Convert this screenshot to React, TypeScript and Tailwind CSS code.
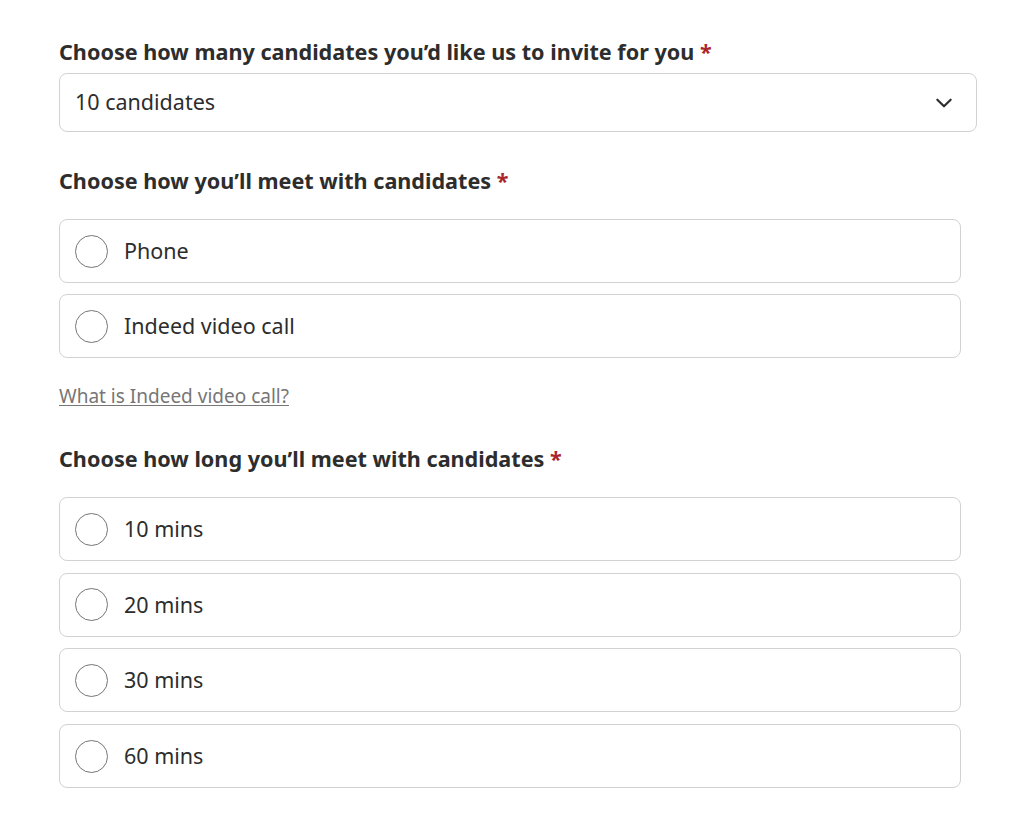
import { useState } from "react";

function Label({ text }: { text: string }) {
  return (
    <h2 className="text-[21.6px] font-bold leading-[28px] text-[#2d2d2d]">
      {text} <span className="text-[#a9252b]">*</span>
    </h2>
  );
}

function RadioRow({
  label,
  checked,
  onClick,
}: {
  label: string;
  checked: boolean;
  onClick: () => void;
}) {
  return (
    <div
      onClick={onClick}
      className="flex h-[64px] cursor-pointer flex-row items-center gap-[16px] rounded-lg border border-[#d4d2d0] pl-[15px]"
    >
      <span className="flex h-[33px] w-[33px] items-center justify-center rounded-full border border-[#767676] bg-white">
        {checked ? <span className="h-4 w-4 rounded-full bg-[#2557a7]" /> : null}
      </span>
      <span className="text-[21.5px] text-[#2d2d2d]">{label}</span>
    </div>
  );
}

export default function App() {
  const [meet, setMeet] = useState<string | undefined>(undefined);
  const [length, setLength] = useState<string | undefined>(undefined);

  return (
    <div
      className="min-h-[828px] bg-white pl-[59px] pr-[52px] pt-[38px]"
      style={{ fontFamily: '"Noto Sans", "Open Sans", sans-serif' }}
    >
      <Label text="Choose how many candidates you’d like us to invite for you" />
      <div className="mt-[7px] flex h-[59px] w-[918px] flex-row items-center justify-between rounded-lg border border-[#d4d2d0] pl-[15px] pr-[22px]">
        <span className="text-[21.5px] text-[#2d2d2d]">10 candidates</span>
        <svg width="20" height="20" viewBox="0 0 24 24" fill="none">
          <path
            d="M4 8l8 8 8-8"
            stroke="#2d2d2d"
            strokeWidth="2.6"
            strokeLinecap="round"
            strokeLinejoin="round"
          />
        </svg>
      </div>

      <div className="mt-[35px]">
        <Label text="Choose how you’ll meet with candidates" />
      </div>
      <div className="mt-[24px] flex w-[902px] flex-col gap-[11px]">
        {["Phone", "Indeed video call"].map((opt) => (
          <RadioRow
            key={opt}
            label={opt}
            checked={meet === opt}
            onClick={() => setMeet(opt)}
          />
        ))}
      </div>
      <a className="mt-[25px] inline-block text-[19px] leading-[26px] text-[#767676] underline underline-offset-2">
        What is Indeed video call?
      </a>

      <div className="mt-[36px]">
        <Label text="Choose how long you’ll meet with candidates" />
      </div>
      <div className="mt-[24px] flex w-[902px] flex-col gap-[11.7px]">
        {["10 mins", "20 mins", "30 mins", "60 mins"].map((opt) => (
          <RadioRow
            key={opt}
            label={opt}
            checked={length === opt}
            onClick={() => setLength(opt)}
          />
        ))}
      </div>
    </div>
  );
}
